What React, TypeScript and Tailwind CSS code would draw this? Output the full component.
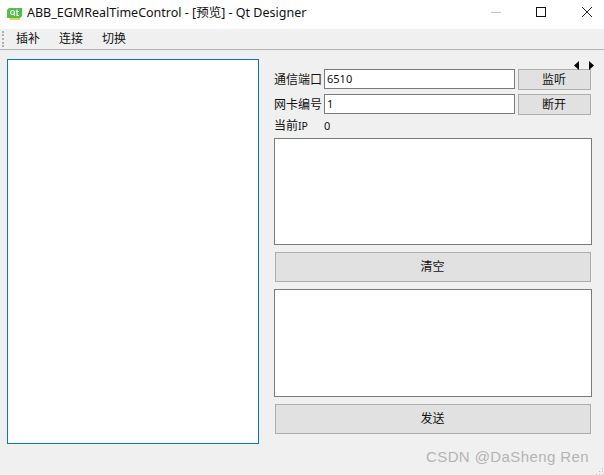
import React from "react";

const font = "font-['Noto_Sans','Noto_Sans_CJK_SC',sans-serif]";

const QtLogo = () => (
  <svg width="15" height="14" viewBox="0 0 15 14" className="shrink-0">
    <path d="M2 1h13v8l-2 2H0V3z" fill="#4fc04a" />
    <path d="M2 11h11v2H3z" fill="#f2cf4a" />
    <circle cx="5.5" cy="5.5" r="2" fill="none" stroke="#fff" strokeWidth="1.2" />
    <path d="M7 7.5l1 1M10 2.5v6h2M9 4.5h3" fill="none" stroke="#fff" strokeWidth="1.1" />
  </svg>
);

const TitleBar = () => (
  <div className="h-[29px] bg-white flex items-center shrink-0">
    <div className="ml-[7px] -mt-[1px]">
      <QtLogo />
    </div>
    <span className="ml-[5px] -mt-[2px] text-[12.5px] text-[#111] whitespace-nowrap">
      ABB_EGMRealTimeControl - [预览] - Qt Designer
    </span>
    <div className="ml-auto flex items-start h-[29px]">
      <svg width="46" height="29" viewBox="0 0 46 29">
        <path d="M25 12.5h10" stroke="#c4c4c4" strokeWidth="1" />
      </svg>
      <svg width="46" height="29" viewBox="0 0 46 29">
        <rect x="24.5" y="7.5" width="9" height="9" fill="none" stroke="#111" strokeWidth="1" />
      </svg>
      <svg width="46" height="29" viewBox="0 0 46 29">
        <path d="M24 7l10 10M34 7L24 17" stroke="#222" strokeWidth="1" />
      </svg>
    </div>
  </div>
);

const MenuBar = () => (
  <div className="h-[21px] border-b border-[#b4b4b4] flex items-center text-[12px] text-[#111] shrink-0">
    <div className="ml-[2px] w-[2px] h-[16px] border-l-2 border-dotted border-[#b0b0b0]" />
    <span className="ml-[12px]">插补</span>
    <span className="ml-[19px]">连接</span>
    <span className="ml-[19px]">切换</span>
  </div>
);

const Field = ({ label, value, btn }: { label: string; value: string; btn: string }) => (
  <div className="flex items-start h-[21px]">
    <span className="w-[50px] h-[21px] flex items-center text-[12px] text-[#111] whitespace-nowrap">{label}</span>
    <div className="w-[191px] h-[20px] bg-white border border-[#7a7a7a] flex items-center pl-[2px] text-[11px] text-[#111]">
      {value}
    </div>
    <button className="ml-[3px] w-[73px] h-[21px] pr-[1px] bg-[#e1e1e1] border border-[#adadad] text-[12px] text-[#111]">
      {btn}
    </button>
  </div>
);

const App: React.FC = () => {
  return (
    <div className={`relative w-[604px] h-[475px] bg-[#f0f0f0] flex flex-col overflow-hidden ${font}`}>
      <TitleBar />
      <MenuBar />
      <div className="flex pl-[7px] pt-[9px]">
        <div className="w-[252px] h-[385px] bg-white border border-[#0078d7]" />
        <div className="ml-[15px] w-[318px] pt-[10px] flex flex-col">
          <Field label="通信端口" value="6510" btn="监听" />
          <div className="mt-[4px]">
            <Field label="网卡编号" value="1" btn="断开" />
          </div>
          <div className="mt-[2px] h-[18px] flex items-center text-[12px] text-[#111]">
            <span className="w-[50px]">
              当前<span className="text-[10.5px]">IP</span>
            </span>
            <span className="text-[11px]">0</span>
          </div>
          <div className="mt-[3px] h-[107px] bg-white border border-[#7a7a7a]" />
          <button className="mt-[7px] ml-[1px] w-[316px] h-[30px] pr-[1px] bg-[#e1e1e1] border border-[#adadad] text-[12px] text-[#111]">
            清空
          </button>
          <div className="mt-[7px] h-[108px] bg-white border border-[#7a7a7a]" />
          <button className="mt-[7px] ml-[1px] w-[316px] h-[30px] pr-[1px] bg-[#e1e1e1] border border-[#adadad] text-[12px] text-[#111]">
            发送
          </button>
        </div>
      </div>

      {/* tab scroll arrows */}
      <svg width="22" height="9" viewBox="0 0 22 9" className="absolute left-[573px] top-[61px]">
        <path d="M6 0v9L1 4.5zM16 0v9l5-4.5z" fill="#000" />
      </svg>

      {/* watermark */}
      <span className="absolute left-[426px] top-[446px] text-[15px] tracking-[0.4px] text-[#b4b4b4] font-['Liberation_Sans',sans-serif] whitespace-nowrap">
        CSDN @DaSheng Ren
      </span>

      {/* size grip */}
      <svg width="8" height="8" viewBox="0 0 8 8" className="absolute right-0 bottom-0">
        <path d="M6 1h1v1H6zM3 4h1v1H3zM6 4h1v1H6zM0 7h1v1H0zM3 7h1v1H3zM6 7h1v1H6z" fill="#bcbcbc" />
      </svg>
    </div>
  );
};

export default App;
